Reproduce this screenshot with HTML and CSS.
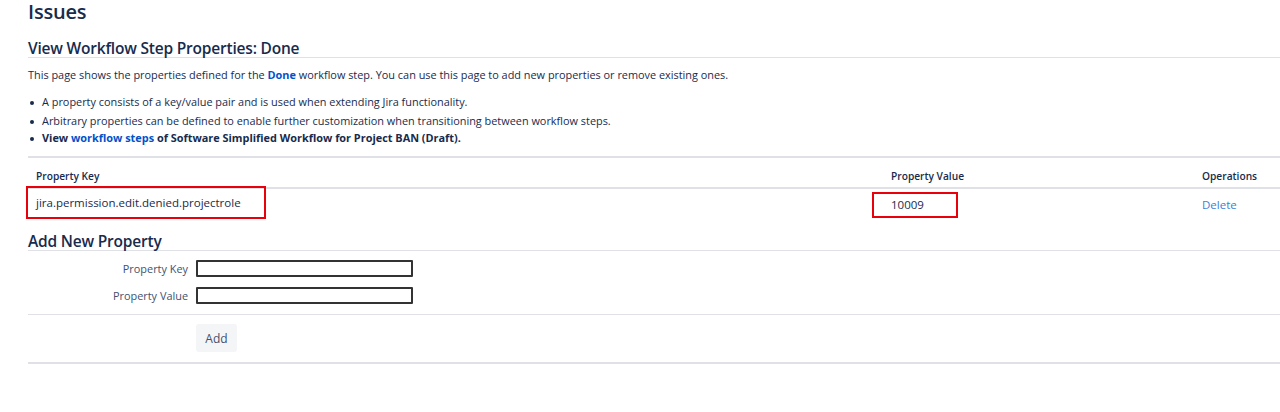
FILE: index.html
```html
<!DOCTYPE html>
<html>
<head>
<meta charset="utf-8">
<link rel="stylesheet" href="styles.css">
</head>
<body>
<div class="page">
  <h1 class="title">Issues</h1>
  <h2 class="subtitle">View Workflow Step Properties: Done</h2>
  <p class="intro">This page shows the properties defined for the <a class="link strong" href="#">Done</a> workflow step. You can use this page to add new properties or remove existing ones.</p>
  <ul class="notes">
    <li>A property consists of a key/value pair and is used when extending Jira functionality.</li>
    <li>Arbitrary properties can be defined to enable further customization when transitioning between workflow steps.</li>
    <li class="strong">View <a class="link" href="#">workflow steps</a> of Software Simplified Workflow for Project BAN (Draft).</li>
  </ul>
  <table class="props">
    <thead>
      <tr><th class="c-key">Property Key</th><th class="c-val">Property Value</th><th class="c-op">Operations</th></tr>
    </thead>
    <tbody>
      <tr>
        <td class="c-key"><span class="mark mark-key">jira.permission.edit.denied.projectrole</span></td>
        <td class="c-val"><span class="mark mark-val">10009</span></td>
        <td class="c-op"><a class="del" href="#">Delete</a></td>
      </tr>
    </tbody>
  </table>
  <h2 class="subtitle add-title">Add New Property</h2>
  <form class="addform">
    <div class="field"><label class="lbl">Property Key</label><input class="txt" type="text"></div>
    <div class="field"><label class="lbl">Property Value</label><input class="txt" type="text"></div>
    <div class="buttons"><button class="btn" type="button">Add</button></div>
  </form>
</div>
</body>
</html>
```
FILE: styles.css
```css
html, body { margin: 0; padding: 0; background: #fff; overflow: hidden; }
body { font-family: "Open Sans", "Noto Sans", sans-serif; color: #172b4d; font-size: 10.9px; }
.page { margin-left: 28px; width: 1262px; }
.title { font-size: 20px; font-weight: 600; margin: 0; line-height: 24px; letter-spacing: -0.2px; }
.subtitle { font-size: 15.5px; font-weight: 600; margin: 0; line-height: 18px; padding-top: 15px; padding-bottom: 0; border-bottom: 1px solid #dfe1e6; letter-spacing: -0.2px; }
.intro { margin: 9px 0 0; line-height: 16px; }
.link { color: #0052cc; text-decoration: none; }
.strong { font-weight: 700; }
.notes { margin: 11px 0 0; padding: 0 0 0 14px; list-style: none; }
.notes li { position: relative; line-height: 16px; margin-bottom: 3px; }
.notes li:nth-child(2) { margin-bottom: 1px; }
.notes li::before { content: ""; position: absolute; left: -12px; top: 7px; width: 4px; height: 4px; border-radius: 50%; background: #172b4d; }
.props { width: 100%; border-collapse: collapse; margin-top: 10px; border-top: 2px solid #dfe1e6; }
.props th { text-align: left; font-weight: 600; font-size: 10.2px; padding: 11px 8px 4px; border-bottom: 2px solid #dfe1e6; line-height: 14px; }
.props td { padding: 0 8px; height: 31px; vertical-align: middle; font-size: 11.5px; line-height: 16px; }
.c-key { width: 839px; }
.c-val { width: 295px; }
.mark { display: inline-block; border: 2px solid #e8000b; position: relative; vertical-align: middle; }
.mark-key { margin: -1px 0 -1px -10px; padding: 7px 24px 6px 8px; width: 204px; top: -2px; }
.mark-val { margin-left: -19px; padding: 3px 32px 3px 17px; }
.del { color: #3b7fd6; text-decoration: none; }
.add-title { padding-top: 12px; }
.addform { border-bottom: 2px solid #dfe1e6; }
.field { display: flex; align-items: center; height: 27px; }
.field:first-child { margin-top: 4px; }
.lbl { width: 160px; text-align: right; padding-right: 8px; color: #42526e; font-size: 10.9px; }
.txt { width: 213px; height: 13px; border: 2px solid #333; border-radius: 1px; padding: 0; margin: 0; }
.buttons { border-top: 1px solid #dfe1e6; margin-top: 5px; padding: 9px 0 10px 168px; }
.btn { font-family: inherit; font-size: 12px; color: #42526e; background: #f4f5f7; border: none; border-radius: 3px; width: 41px; height: 28px; padding: 0; display: block; }
```
